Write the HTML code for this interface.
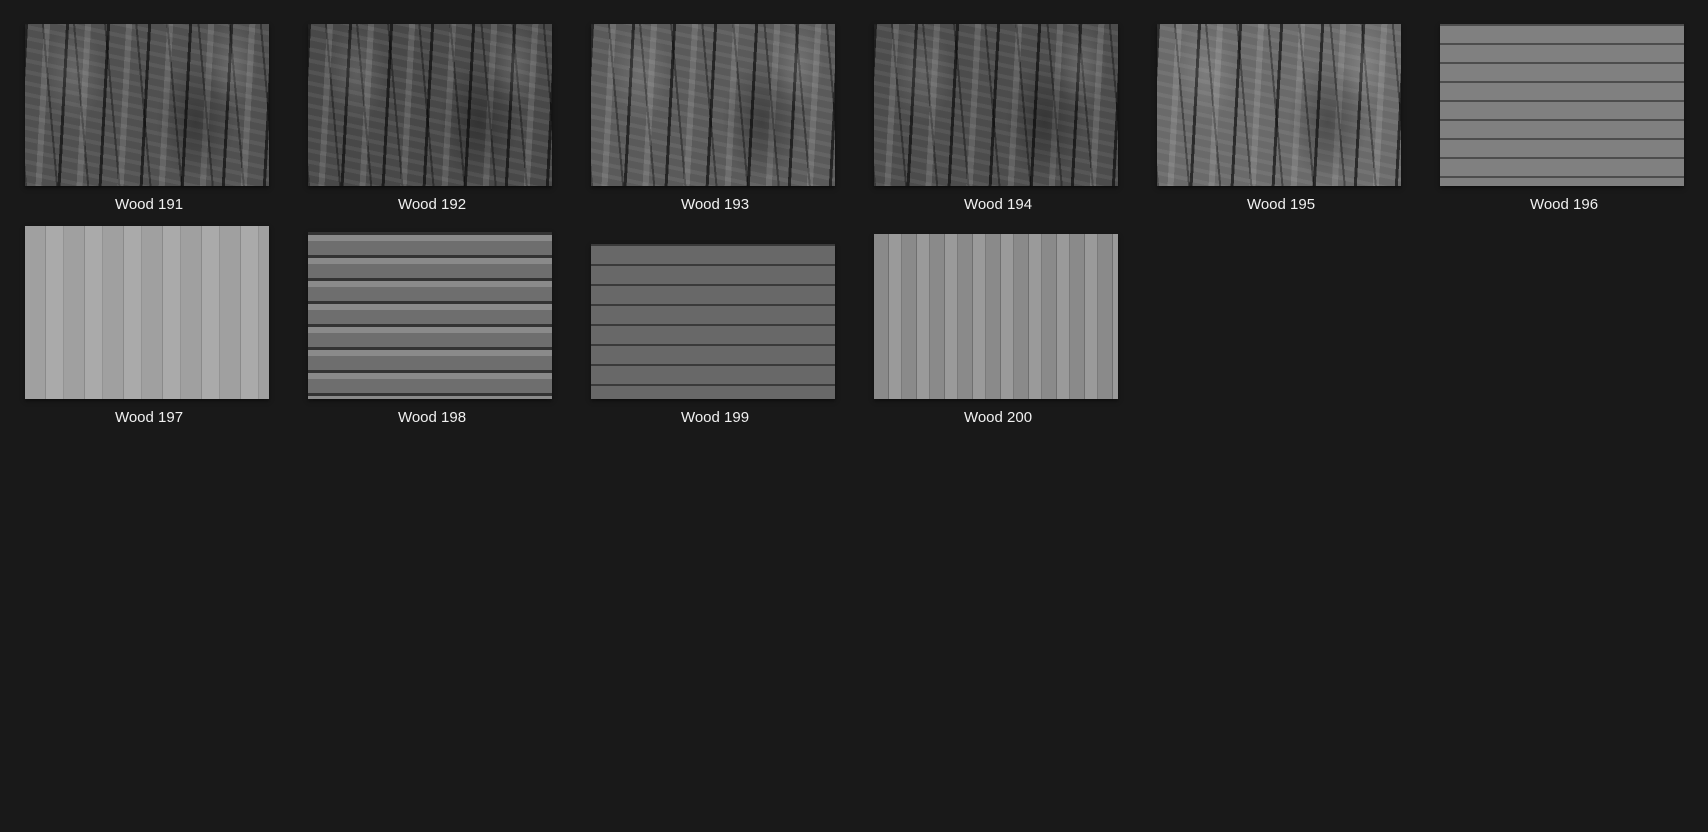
<!DOCTYPE html>
<html><head><style>
html,body{margin:0;padding:0;background:#191919;width:1708px;height:832px;overflow:hidden}
.t{position:absolute;width:244px}
.i{position:absolute;left:0;width:244px;box-shadow:0 2px 4px rgba(0,0,0,.5)}
.l{position:absolute;width:244px;left:2px;text-align:center;color:#f0f0f0;font:15px "Liberation Sans",sans-serif}
.bark{background:
 radial-gradient(ellipse 30px 50px at 20% 30%,rgba(255,255,255,.12),transparent),
 radial-gradient(ellipse 40px 60px at 70% 60%,rgba(0,0,0,.3),transparent),
 radial-gradient(ellipse 25px 45px at 85% 25%,rgba(255,255,255,.15),transparent),
 repeating-linear-gradient(93deg,rgba(0,0,0,.6) 0 3px,transparent 3px 19px,rgba(255,255,255,.12) 19px 25px,transparent 25px 41px),
 repeating-linear-gradient(85deg,rgba(0,0,0,.35) 0 2px,transparent 2px 31px),
 repeating-linear-gradient(12deg,rgba(255,255,255,.06) 0 4px,transparent 4px 11px),
 #4f4f4f}
</style></head><body>
<div class="t" style="left:25px;top:0"><div class="i bark" style="top:24px;height:162px;background-color:#505050"></div><div class="l" style="top:196px">Wood 191</div></div>
<div class="t" style="left:308px;top:0"><div class="i bark" style="top:24px;height:162px;background-color:#484848"></div><div class="l" style="top:196px">Wood 192</div></div>
<div class="t" style="left:591px;top:0"><div class="i bark" style="top:24px;height:162px;background-color:#5a5a5a"></div><div class="l" style="top:196px">Wood 193</div></div>
<div class="t" style="left:874px;top:0"><div class="i bark" style="top:24px;height:162px;background-color:#4c4c4c"></div><div class="l" style="top:196px">Wood 194</div></div>
<div class="t" style="left:1157px;top:0"><div class="i bark" style="top:24px;height:162px;background-color:#6a6a6a"></div><div class="l" style="top:196px">Wood 195</div></div>
<div class="t" style="left:1440px;top:0"><div class="i" style="top:24px;height:162px;background:repeating-linear-gradient(180deg,#4d4d4d 0 2px,#808080 2px 19px)"></div><div class="l" style="top:196px">Wood 196</div></div>
<div class="t" style="left:25px;top:0"><div class="i" style="top:226px;height:173px;background:repeating-linear-gradient(90deg,#a0a0a0 0 20px,#8a8a8a 20px 21px,#aaa 21px 38px,#939393 38px 39px)"></div><div class="l" style="top:409px">Wood 197</div></div>
<div class="t" style="left:308px;top:0"><div class="i" style="top:232px;height:167px;background:repeating-linear-gradient(180deg,#333 0 3px,#8a8a8a 3px 9px,#6e6e6e 9px 23px)"></div><div class="l" style="top:409px">Wood 198</div></div>
<div class="t" style="left:591px;top:0"><div class="i" style="top:244px;height:155px;background:repeating-linear-gradient(180deg,#3a3a3a 0 2px,#686868 2px 20px)"></div><div class="l" style="top:409px">Wood 199</div></div>
<div class="t" style="left:874px;top:0"><div class="i" style="top:234px;height:165px;background:repeating-linear-gradient(90deg,#8a8a8a 0 14px,#6f6f6f 14px 15px,#9a9a9a 15px 27px,#7a7a7a 27px 28px)"></div><div class="l" style="top:409px">Wood 200</div></div>
</body></html>
